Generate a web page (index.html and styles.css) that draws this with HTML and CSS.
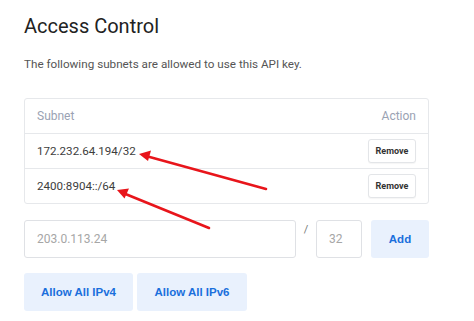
FILE: index.html
```html
<!DOCTYPE html>
<html>
<head>
<meta charset="utf-8">
<link rel="stylesheet" href="styles.css">
</head>
<body>
<div class="page">
  <h1 class="title">Access Control</h1>
  <p class="desc">The following subnets are allowed to use this API key.</p>
  <div class="table">
    <div class="row head">
      <span>Subnet</span>
      <span>Action</span>
    </div>
    <div class="row">
      <span class="subnet">172.232.64.194/32</span>
      <button class="remove">Remove</button>
    </div>
    <div class="row last">
      <span class="subnet">2400:8904::/64</span>
      <button class="remove">Remove</button>
    </div>
  </div>
  <div class="add-row">
    <div class="input ip">203.0.113.24</div>
    <span class="slash">/</span>
    <div class="input mask">32</div>
    <button class="btn add">Add</button>
  </div>
  <div class="allow-row">
    <button class="btn allow4">Allow All IPv4</button>
    <button class="btn allow6">Allow All IPv6</button>
  </div>
  <svg class="arrows" width="474" height="321" viewBox="0 0 474 321">
    <g stroke="#e8151b" stroke-width="2.6" stroke-linecap="round" fill="none">
      <line x1="266" y1="189" x2="146" y2="156"/>
      <line x1="209" y1="228" x2="123" y2="193"/>
    </g>
    <g fill="#e8151b">
      <polygon points="139,154 151,150.5 148,161"/>
      <polygon points="117,190 129,188.5 124.5,198.5"/>
    </g>
  </svg>
</div>
</body>
</html>
```
FILE: styles.css
```css
* { box-sizing: border-box; }
html, body { margin: 0; padding: 0; background: #fff; }
body {
  font-family: Roboto, "Liberation Sans", Arial, sans-serif;
  color: #333;
  width: 474px;
  height: 321px;
  overflow: hidden;
}
.page {
  position: relative;
  padding: 14px 0 0 24px;
  width: 474px;
  height: 321px;
}
.title {
  margin: 0;
  font-size: 20px;
  font-weight: 400;
  line-height: 24px;
  color: #222;
}
.desc {
  margin: 18px 0 0;
  font-size: 11.7px;
  line-height: 16px;
  color: #555;
}
.table {
  margin-top: 26px;
  width: 405px;
  border: 1px solid #e6e8eb;
  border-radius: 3px;
}
.row {
  display: flex;
  align-items: center;
  justify-content: space-between;
  height: 35px;
  padding: 0 12px 0 12px;
  border-bottom: 1px solid #e6e8eb;
}
.row.last { border-bottom: none; height: 34px; }
.head {
  font-size: 12px;
  color: #9aa2b3;
}
.subnet {
  font-size: 11.6px;
  color: #3d3d3d;
}
.remove {
  width: 48px;
  height: 24px;
  padding: 0;
  border: 1px solid #e3e5e8;
  border-radius: 3px;
  background: #fff;
  font-family: inherit;
  font-size: 9px;
  font-weight: 700;
  color: #333;
  box-shadow: 0 1px 1px rgba(0,0,0,0.04);
}
.add-row {
  display: flex;
  align-items: flex-start;
  margin-top: 16px;
  height: 38px;
}
.input {
  height: 38px;
  border: 1px solid #dfe1e5;
  border-radius: 3px;
  font-size: 12px;
  color: #a6a6a6;
  display: flex;
  align-items: center;
  padding-left: 12px;
}
.ip { width: 272px; }
.slash {
  width: 20px;
  text-align: center;
  font-size: 11px;
  color: #777;
  line-height: 14px;
  padding-top: 3px;
}
.mask { width: 46px; }
.btn {
  border: none;
  border-radius: 3px;
  background: #e9f1fd;
  color: #1a6fdc;
  font-family: "Liberation Sans", Arial, sans-serif;
  font-weight: 700;
  font-size: 11.5px;
  height: 38px;
  padding: 0;
}
.add { width: 58px; margin-left: 9px; }
.allow-row {
  display: flex;
  gap: 4px;
  margin-top: 15px;
}
.allow4 { width: 109px; }
.allow6 { width: 110px; }
.arrows {
  position: absolute;
  left: 0;
  top: 0;
  pointer-events: none;
}
```
